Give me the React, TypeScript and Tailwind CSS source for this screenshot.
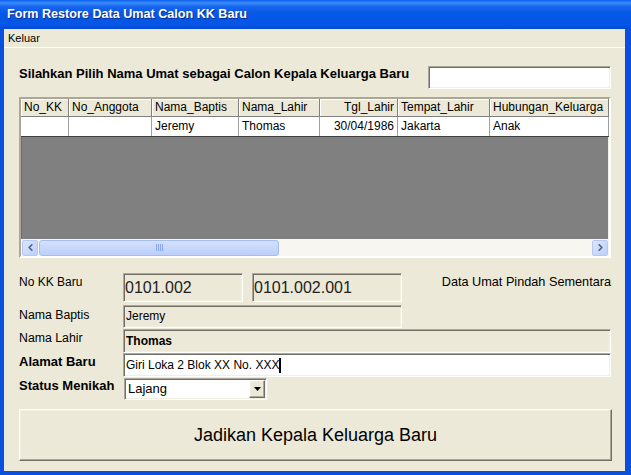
import { ChevronLeft, ChevronRight } from "lucide-react";

const sunken = "border border-[#aca899] border-b-white border-r-white shadow-[inset_1px_1px_0_#716f64,inset_-1px_-1px_0_#f1efe2]";
const raised = "border border-white border-b-[#716f64] border-r-[#716f64] shadow-[inset_-1px_-1px_0_#aca899,inset_1px_1px_0_#f1efe2]";

const cols = [
    { name: "No_KK", w: "w-[48px]", value: "", right: false },
    { name: "No_Anggota", w: "w-[83px]", value: "", right: false },
    { name: "Nama_Baptis", w: "w-[87px]", value: "Jeremy", right: false },
    { name: "Nama_Lahir", w: "w-[81px]", value: "Thomas", right: false },
    { name: "Tgl_Lahir", w: "w-[78px]", value: "30/04/1986", right: true },
    { name: "Tempat_Lahir", w: "w-[92px]", value: "Jakarta", right: false },
    { name: "Hubungan_Keluarga", w: "w-[119px]", value: "Anak", right: false },
];

function Grid() {
    return (
        <div className={`mt-[8px] h-[161px] w-[592px] flex flex-col bg-[#808080] ${sunken} border-2 border-t-[#aca899] border-l-[#aca899]`}>
            <div className="flex h-[18px] bg-[#ece9d8]">
                {cols.map((c) => (
                    <div key={c.name} className={`${c.w} shrink-0 border-r border-b border-[#808080] shadow-[inset_1px_1px_0_#ffffff] px-[3px] text-[12px] leading-[17px] text-black ${c.right ? "text-right" : ""}`}>
                        {c.name}
                    </div>
                ))}
            </div>
            <div className="flex h-[20px] bg-white border-b border-[#404040]">
                {cols.map((c) => (
                    <div key={c.name} className={`${c.w} shrink-0 border-r border-[#a0a0a0] px-[3px] text-[12px] leading-[19px] text-black ${c.right ? "text-right" : ""}`}>
                        {c.value}
                    </div>
                ))}
            </div>
            <div className="flex-1" />
            <div className="flex h-[17px] items-center bg-[#f7f6f1] px-[1px]">
                <div className="w-[16px] h-[16px] shrink-0 rounded-[2px] border border-[#b6c9f6] bg-[linear-gradient(135deg,#dce6fd,#bccff9)] flex items-center justify-center">
                    <ChevronLeft size={11} strokeWidth={3.5} color="#4d6185" />
                </div>
                <div className="ml-[1px] w-[240px] h-[16px] shrink-0 rounded-[3px] border border-[#a5bdf3] bg-[linear-gradient(to_bottom,#d4e0fd,#bccffa)] flex items-center justify-center gap-[1px]">
                    <span className="w-[1px] h-[7px] bg-[#8aa6ee]" />
                    <span className="w-[1px] h-[7px] bg-[#8aa6ee]" />
                    <span className="w-[1px] h-[7px] bg-[#8aa6ee]" />
                    <span className="w-[1px] h-[7px] bg-[#8aa6ee]" />
                </div>
                <div className="flex-1" />
                <div className="w-[16px] h-[16px] shrink-0 rounded-[2px] border border-[#b6c9f6] bg-[linear-gradient(135deg,#dce6fd,#bccff9)] flex items-center justify-center">
                    <ChevronRight size={11} strokeWidth={3.5} color="#4d6185" />
                </div>
            </div>
        </div>
    );
}

export default function App() {
    return (
        <div className="w-[631px] h-[475px] flex flex-col bg-[#0a50e0] font-['Liberation_Sans',Arial,sans-serif] overflow-hidden">
            <div className="h-[29px] shrink-0 flex items-center pl-[7px] bg-[linear-gradient(to_bottom,#0b5ff0_0%,#3b8df8_10%,#1867ee_22%,#0658e7_45%,#0556e6_85%,#0349d3_100%)]">
                <span className="text-white font-bold text-[12.6px] [text-shadow:1px_1px_0_#0b2c8a]">Form Restore Data Umat Calon KK Baru</span>
            </div>
            <div className="flex-1 ml-[4px] mr-[6px] mb-[4px] bg-[#ece9d8] flex flex-col">
                <div className="h-[19px] shrink-0 border-b border-white flex items-center pl-[4px] text-[11px] text-black">
                    Keluar
                </div>
                <div className="flex flex-col pl-[15px] pr-[14px] pt-[18px]">
                    <div className="flex items-start h-[23px]">
                        <span className="text-[13px] font-bold leading-[15px] text-black">Silahkan Pilih Nama Umat sebagai Calon Kepala Keluarga Baru</span>
                        <div className={`ml-auto w-[183px] h-[23px] bg-white ${sunken}`} />
                    </div>
                    <Grid />
                    <div className="mt-[15px] flex items-start h-[29px]">
                        <span className="w-[104px] shrink-0 pt-[2px] text-[12px] leading-[14px]">No KK Baru</span>
                        <div className={`w-[120px] h-[29px] ${sunken} pl-[1px] text-[16px] leading-[27px] text-[#222]`}>0101.002</div>
                        <div className={`ml-[9px] w-[150px] h-[29px] ${sunken} pl-[1px] text-[16px] leading-[27px] text-[#222]`}>0101.002.001</div>
                        <span className="ml-auto pt-[2px] text-[12.7px] leading-[14px]">Data Umat Pindah Sementara</span>
                    </div>
                    <div className="mt-[3px] flex items-start h-[23px]">
                        <span className="w-[104px] shrink-0 pt-[3px] text-[12.3px] leading-[14px]">Nama Baptis</span>
                        <div className={`w-[279px] h-[23px] ${sunken} pl-[2px] text-[12px] leading-[21px]`}>Jeremy</div>
                    </div>
                    <div className="mt-[1px] flex items-start h-[24px]">
                        <span className="w-[104px] shrink-0 pt-[2px] text-[12.3px] leading-[14px]">Nama Lahir</span>
                        <div className={`flex-1 h-[24px] ${sunken} pl-[2px] text-[12px] font-bold leading-[22px]`}>Thomas</div>
                    </div>
                    <div className="flex items-start h-[24px]">
                        <span className="w-[104px] shrink-0 pt-[1px] text-[13px] font-bold leading-[15px]">Alamat Baru</span>
                        <div className={`flex-1 h-[24px] bg-white ${sunken} pl-[2px] text-[12px] leading-[22px] flex items-center`}>
                            Giri Loka 2 Blok XX No. XXX
                            <span className="w-[2px] h-[15px] bg-black" />
                        </div>
                    </div>
                    <div className="mt-[1px] flex items-start h-[22px]">
                        <span className="w-[105px] shrink-0 text-[13px] font-bold leading-[15px]">Status Menikah</span>
                        <div className={`w-[143px] h-[22px] bg-white ${sunken} flex items-center`}>
                            <span className="flex-1 pl-[3px] text-[13px] leading-[18px]">Lajang</span>
                            <div className={`w-[16px] h-[18px] mr-[1px] bg-[#ece9d8] ${raised} flex items-center justify-center`}>
                                <svg width="7" height="4" viewBox="0 0 7 4"><polygon points="0,0 7,0 3.5,4" fill="#000" /></svg>
                            </div>
                        </div>
                    </div>
                    <button className={`mt-[9px] w-[593px] h-[52px] bg-[#ece9d8] ${raised} text-[18px] text-black leading-[50px] text-center`}>
                        Jadikan Kepala Keluarga Baru
                    </button>
                </div>
            </div>
        </div>
    );
}
